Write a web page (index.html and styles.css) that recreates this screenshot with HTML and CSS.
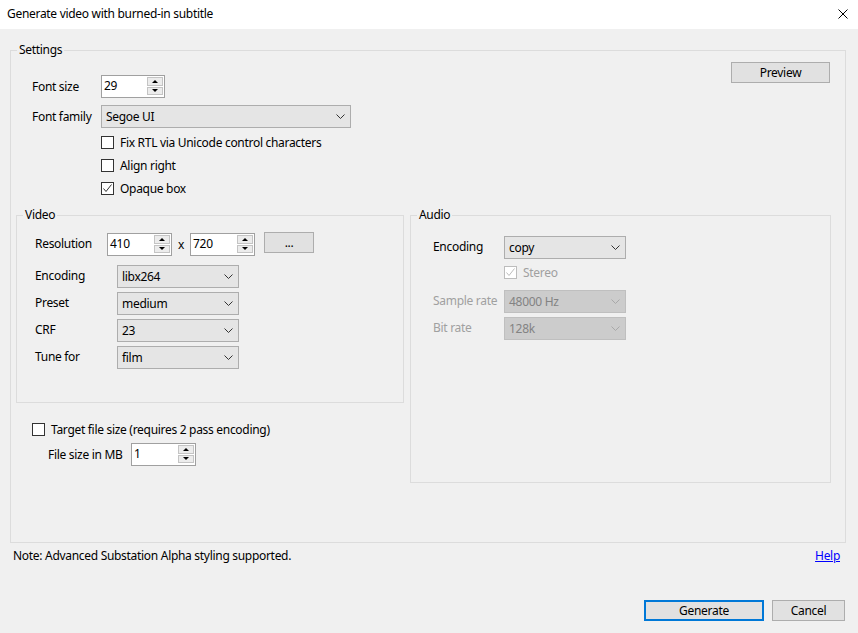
FILE: index.html
```html
<!DOCTYPE html>
<html>
<head>
<meta charset="utf-8">
<link rel="stylesheet" href="styles.css">
</head>
<body>
<div class="window">
  <div class="titlebar">
    <span class="title">Generate video with burned-in subtitle</span>
    <svg class="close" width="10" height="10" viewBox="0 0 10 10"><path d="M0.5 0.5L9.5 9.5M9.5 0.5L0.5 9.5" stroke="#000" stroke-width="1" fill="none"/></svg>
  </div>

  <fieldset class="group settings">
    <legend>Settings</legend>
    <div class="top">
      <div class="fontcol">
        <div class="row">
          <span class="lbl w69">Font size</span>
          <div class="spin w64"><span class="val">29</span><span class="btns"><span class="sb"><i class="tri up"></i></span><span class="sb"><i class="tri down"></i></span></span></div>
        </div>
        <div class="row r2">
          <span class="lbl w69">Font family</span>
          <div class="combo w250"><span>Segoe UI</span><svg class="chev" width="9" height="5" viewBox="0 0 9 5"><path d="M0.5 0.5L4.5 4.5L8.5 0.5" stroke="#333" fill="none"/></svg></div>
        </div>
        <div class="checks">
          <label class="chk"><span class="box"></span>Fix RTL via Unicode control characters</label>
          <label class="chk"><span class="box"></span>Align right</label>
          <label class="chk"><span class="box"><svg width="11" height="11" viewBox="0 0 11 11"><path d="M1.5 5.5L4 8.5L9.5 1.5" stroke="#333" fill="none"/></svg></span>Opaque box</label>
        </div>
      </div>
      <button class="btn preview">Preview</button>
    </div>

    <div class="groups">
      <div class="leftcol">
        <fieldset class="group video">
          <legend>Video</legend>
          <div class="resrow">
            <span class="lbl w72">Resolution</span>
            <div class="spin w65"><span class="val">410</span><span class="btns"><span class="sb"><i class="tri up"></i></span><span class="sb"><i class="tri down"></i></span></span></div>
            <span class="times">x</span>
            <div class="spin w65"><span class="val">720</span><span class="btns"><span class="sb"><i class="tri up"></i></span><span class="sb"><i class="tri down"></i></span></span></div>
            <button class="btn dots">...</button>
          </div>
          <div class="vrows">
            <div class="crow"><span class="lbl w82">Encoding</span><div class="combo w122"><span>libx264</span><svg class="chev" width="9" height="5" viewBox="0 0 9 5"><path d="M0.5 0.5L4.5 4.5L8.5 0.5" stroke="#333" fill="none"/></svg></div></div>
            <div class="crow"><span class="lbl w82">Preset</span><div class="combo w122"><span>medium</span><svg class="chev" width="9" height="5" viewBox="0 0 9 5"><path d="M0.5 0.5L4.5 4.5L8.5 0.5" stroke="#333" fill="none"/></svg></div></div>
            <div class="crow"><span class="lbl w82">CRF</span><div class="combo w122"><span>23</span><svg class="chev" width="9" height="5" viewBox="0 0 9 5"><path d="M0.5 0.5L4.5 4.5L8.5 0.5" stroke="#333" fill="none"/></svg></div></div>
            <div class="crow"><span class="lbl w82">Tune for</span><div class="combo w122"><span>film</span><svg class="chev" width="9" height="5" viewBox="0 0 9 5"><path d="M0.5 0.5L4.5 4.5L8.5 0.5" stroke="#333" fill="none"/></svg></div></div>
          </div>
        </fieldset>
        <div class="target">
          <label class="chk"><span class="box"></span>Target file size (requires 2 pass encoding)</label>
          <div class="row fsrow">
            <span class="lbl w83">File size in MB</span>
            <div class="spin w65"><span class="val">1</span><span class="btns"><span class="sb"><i class="tri up"></i></span><span class="sb"><i class="tri down"></i></span></span></div>
          </div>
        </div>
      </div>

      <fieldset class="group audio">
        <legend>Audio</legend>
        <div class="arows">
          <div class="crow"><span class="lbl w71">Encoding</span><div class="combo w122"><span>copy</span><svg class="chev" width="9" height="5" viewBox="0 0 9 5"><path d="M0.5 0.5L4.5 4.5L8.5 0.5" stroke="#333" fill="none"/></svg></div></div>
          <label class="chk disabled stereo"><span class="box"><svg width="11" height="11" viewBox="0 0 11 11"><path d="M1.5 5.5L4 8.5L9.5 1.5" stroke="#bcbcbc" fill="none"/></svg></span>Stereo</label>
          <div class="crow dis sr"><span class="lbl w71">Sample rate</span><div class="combo w122"><span>48000 Hz</span><svg class="chev" width="9" height="5" viewBox="0 0 9 5"><path d="M0.5 0.5L4.5 4.5L8.5 0.5" stroke="#a8a8a8" fill="none"/></svg></div></div>
          <div class="crow dis"><span class="lbl w71">Bit rate</span><div class="combo w122"><span>128k</span><svg class="chev" width="9" height="5" viewBox="0 0 9 5"><path d="M0.5 0.5L4.5 4.5L8.5 0.5" stroke="#a8a8a8" fill="none"/></svg></div></div>
        </div>
      </fieldset>
    </div>
  </fieldset>

  <div class="noterow">
    <span>Note: Advanced Substation Alpha styling supported.</span>
    <a class="help" href="#">Help</a>
  </div>

  <div class="actions">
    <button class="btn generate">Generate</button>
    <button class="btn cancel">Cancel</button>
  </div>
</div>
</body>
</html>
```

FILE: styles.css
```css
* { box-sizing: border-box; }
html, body { margin: 0; padding: 0; }
body {
  width: 858px;
  height: 633px;
  overflow: hidden;
  background: #f0f0f0;
  font-family: "Noto Sans", "Open Sans", sans-serif;
  font-size: 12px;
  letter-spacing: -0.3px;
  color: #000;
}
.window { width: 858px; height: 633px; }

.titlebar {
  height: 29px;
  background: #fff;
  display: flex;
  align-items: center;
  justify-content: space-between;
  padding: 0 10px 0 7px;
}
.title { line-height: 16px; margin-top: -1px; }
.close { display: block; margin-top: -1px; }

.group {
  margin: 0;
  padding: 0;
  border: 1px solid #dcdcdc;
  min-width: 0;
}
.group > legend {
  margin-left: 6px;
  padding: 0 2px;
  line-height: 16px;
  height: 16px;
}

.settings {
  margin: 13px 0 0 10px;
  width: 836px;
  height: 501px;
}

.top { display: flex; justify-content: space-between; align-items: flex-start; }
.fontcol { padding: 17px 0 0 21px; }
.row { display: flex; align-items: center; }
.row .lbl { margin-top: -1px; }
.r2 { margin-top: 7px; }
.lbl { display: inline-block; white-space: nowrap; }
.w69 { width: 69px; }
.w71 { width: 71px; }
.w72 { width: 72px; }
.w82 { width: 82px; }
.w83 { width: 83px; }

.spin {
  display: flex;
  height: 23px;
  border: 1px solid #a0a0a0;
  background: #fff;
  padding: 1px 1px 2px 1px;
}
.w64 { width: 64px; }
.w65 { width: 65px; }
.spin .val { flex: 1; line-height: 18px; padding-left: 1px; }
.spin .btns { display: flex; flex-direction: column; width: 16px; gap: 1px; }
.spin .sb {
  flex: 1;
  border: 1px solid #c4c4c4;
  background: #ececec;
  display: flex;
  align-items: center;
  justify-content: center;
}
.tri { display: block; width: 0; height: 0; border-left: 3px solid transparent; border-right: 3px solid transparent; }
.tri.up { border-bottom: 3px solid #000; }
.tri.down { border-top: 3px solid #000; }

.combo {
  height: 23px;
  border: 1px solid #adadad;
  background: #e5e5e5;
  display: flex;
  align-items: center;
  justify-content: space-between;
  padding: 0 5px 0 4px;
}
.w250 { width: 250px; }
.w122 { width: 122px; }
.chev { display: block; }

.checks { margin: 3px 0 0 69px; }
.chk { display: flex; align-items: center; height: 23px; white-space: nowrap; }
.chk .box {
  width: 13px;
  height: 13px;
  border: 1px solid #333;
  background: #fff;
  margin-right: 6px;
  display: flex;
  align-items: center;
  justify-content: center;
  flex: none;
}
.chk .box svg { display: block; }

.btn {
  font-family: inherit;
  font-size: 12px;
  letter-spacing: -0.3px;
  color: #000;
  background: #e1e1e1;
  border: 1px solid #adadad;
  padding: 0;
  height: 21px;
  line-height: 17px;
}
.preview { width: 99px; margin: 4px 15px 0 0; }

.groups { display: flex; align-items: flex-start; gap: 6px; margin: 7px 0 0 5px; }
.leftcol { width: 388px; }
.video { width: 388px; height: 196px; }
.audio { width: 421px; height: 276px; }

.resrow { display: flex; align-items: flex-start; margin: 9px 0 0 18px; }
.resrow .lbl { line-height: 23px; margin-top: 0; }
.resrow .spin { margin-top: 1px; }
.times { width: 18px; text-align: center; line-height: 23px; margin-top: 1px; }
.dots { width: 50px; margin-left: 9px; }

.vrows { margin: 9px 0 0 18px; display: flex; flex-direction: column; gap: 4px; }
.crow { display: flex; align-items: center; }
.crow .lbl { margin-top: -3px; }

.target { margin: 15px 0 0 16px; }
.fsrow { margin: 2px 0 0 16px; }
.fsrow .lbl { margin-top: 0; }

.arows { margin: 13px 0 0 22px; }
.stereo { margin: 2px 0 0 71px; height: 23px; }
.disabled { color: #a0a0a0; }
.disabled .box { border-color: #bcbcbc; background: #fff; }
.sr { margin-top: 6px; }
.dis + .dis { margin-top: 4px; }
.dis .lbl { color: #a0a0a0; }
.dis .combo { background: #cccccc; border-color: #bfbfbf; color: #838383; }

.noterow {
  display: flex;
  justify-content: space-between;
  align-items: center;
  height: 20px;
  margin-top: 2px;
  padding: 0 18px 0 13px;
}
.help { color: #0000ff; text-decoration: underline; }

.actions {
  display: flex;
  justify-content: flex-end;
  gap: 8px;
  margin-top: 35px;
  padding-right: 13px;
}
.generate { width: 120px; border: 2px solid #0078d7; }
.cancel { width: 73px; }
```
